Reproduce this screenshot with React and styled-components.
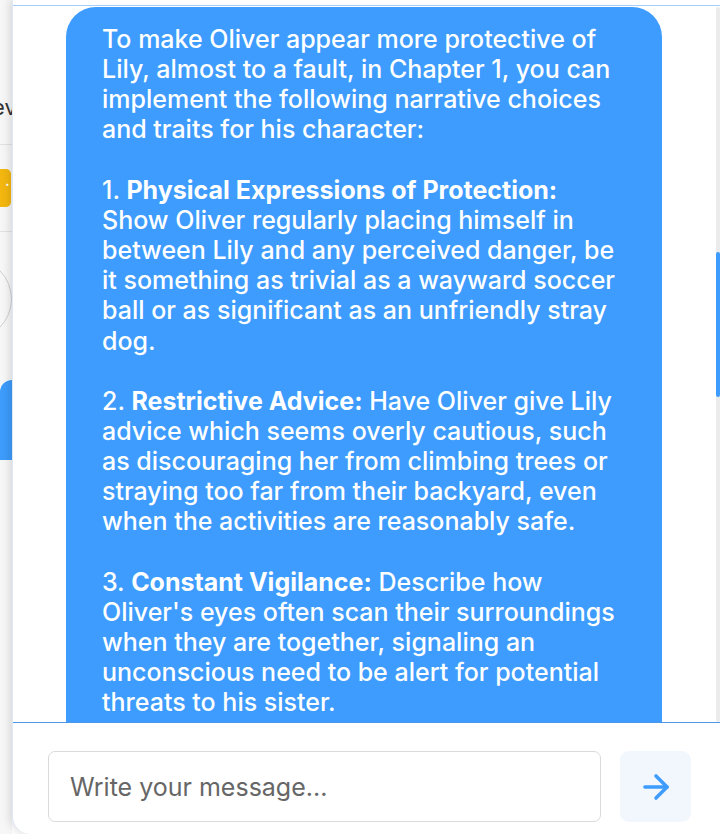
import React from 'react'
import styled, { createGlobalStyle } from 'styled-components'
import { ArrowRight } from 'lucide-react'

const GlobalStyle = createGlobalStyle`
  html, body {
    margin: 0;
    padding: 0;
    height: 100%;
    background: #ffffff;
    font-family: Inter, "Noto Sans", sans-serif;
  }
  #root {
    height: 834px;
  }
`

const paragraphs = [
  { text: 'To make Oliver appear more protective of Lily, almost to a fault, in Chapter 1, you can implement the following narrative choices and traits for his character:' },
  { num: '1.', title: 'Physical Expressions of Protection:', text: 'Show Oliver regularly placing himself in between Lily and any perceived danger, be it something as trivial as a wayward soccer ball or as significant as an unfriendly stray dog.' },
  { num: '2.', title: 'Restrictive Advice:', text: 'Have Oliver give Lily advice which seems overly cautious, such as discouraging her from climbing trees or straying too far from their backyard, even when the activities are reasonably safe.' },
  { num: '3.', title: 'Constant Vigilance:', text: 'Describe how Oliver\'s eyes often scan their surroundings when they are together, signaling an unconscious need to be alert for potential threats to his sister.' },
  { num: '4.', title: 'Emotional Reassurance:', text: 'Let Oliver be the first to comfort Lily whenever she is upset, sometimes before she even asks for help.' }
]

const App = () =>
  <>
    <GlobalStyle />
    <S.Screen>
      <S.Backdrop>
        <S.BackText>ev</S.BackText>
        <S.BackRule />
        <S.BackButton>.</S.BackButton>
        <S.BackRule />
        <S.BackCircle />
        <S.BackCard />
      </S.Backdrop>

      <S.Panel>
        <S.Messages>
          <S.List>
            <S.Bubble>
              {paragraphs.map((p, i) =>
                <S.Paragraph key={i}>
                  {p.num && <>{p.num} </>}
                  {p.title && <strong>{p.title}</strong>}
                  {p.title && ' '}
                  {p.text}
                </S.Paragraph>
              )}
            </S.Bubble>
          </S.List>
          <S.Track>
            <S.Thumb />
          </S.Track>
        </S.Messages>

        <S.Composer>
          <S.Input placeholder='Write your message...' />
          <S.Send aria-label='Send'>
            <ArrowRight size={38} strokeWidth={2.2} />
          </S.Send>
        </S.Composer>
      </S.Panel>
    </S.Screen>
  </>

const S = {
  Screen: styled.div`
    display: flex;
    height: 834px;
    width: 720px;
    overflow: hidden;
  `,
  Backdrop: styled.div`
    width: 12px;
    flex: none;
    display: flex;
    flex-direction: column;
    overflow: hidden;
    background: #f7f7f7;
  `,
  BackText: styled.div`
    margin-top: 94px;
    margin-left: -8px;
    font-size: 22px;
    color: #333;
    line-height: 26px;
    white-space: nowrap;
  `,
  BackRule: styled.div`
    margin-top: 24px;
    height: 1px;
    flex: none;
    background: #e2e2e2;
  `,
  BackButton: styled.div`
    margin-top: 24px;
    margin-left: -20px;
    width: 30px;
    height: 38px;
    flex: none;
    border-radius: 0 5px 5px 0;
    background: #f4b70f;
    color: #fff;
    font-size: 18px;
    text-align: right;
    padding-right: 1px;
  `,
  BackCircle: styled.div`
    margin-top: 26px;
    margin-left: -70px;
    width: 80px;
    height: 80px;
    flex: none;
    border-radius: 50%;
    border: 1px solid #cfcfcf;
  `,
  BackCard: styled.div`
    margin-top: 40px;
    width: 30px;
    height: 80px;
    flex: none;
    border-radius: 12px 0 0 0;
    background: #3d9cfc;
  `,
  Panel: styled.div`
    flex: 1;
    display: flex;
    flex-direction: column;
    background: #fff;
    border-left: 1px solid #dfe8f5;
    border-radius: 0 0 0 18px;
    box-shadow: -3px 0 9px rgba(0, 0, 0, 0.12);
    padding-top: 5px;
    min-width: 0;
  `,
  Messages: styled.div`
    flex: 1;
    display: flex;
    min-height: 0;
    border-top: 1px solid #a5cdf7;
    border-bottom: 1px solid #4b96e6;
  `,
  List: styled.div`
    flex: 1;
    overflow: hidden;
    padding: 1px 54px 0 53px;
  `,
  Bubble: styled.div`
    background: #3d9cfd;
    color: #fff;
    border-radius: 30px 30px 0 0;
    padding: 17px 34px 40px 36px;
    font-size: 25px;
    line-height: 30.15px;
    font-weight: 500;

    strong {
      font-weight: 700;
    }
  `,
  Paragraph: styled.p`
    margin: 0 0 30.15px;
  `,
  Track: styled.div`
    width: 4px;
    flex: none;
    margin-top: 1px;
    background: #ebebeb;
    border-radius: 2px;
    display: flex;
    flex-direction: column;
  `,
  Thumb: styled.div`
    margin-top: 245px;
    height: 145px;
    background: #3d9cfd;
    border-radius: 2px;
  `,
  Composer: styled.div`
    display: flex;
    align-items: center;
    gap: 19px;
    padding: 28px 29px 12px 35px;
  `,
  Input: styled.input`
    flex: 1;
    min-width: 0;
    height: 71px;
    box-sizing: border-box;
    padding: 0 21px;
    border: 1.5px solid #dadada;
    border-radius: 7px;
    font-family: Inter, "Noto Sans", sans-serif;
    font-size: 25px;
    color: #333;
    outline: none;

    &::placeholder {
      color: #666666;
    }
  `,
  Send: styled.button`
    width: 71px;
    height: 71px;
    flex: none;
    border: none;
    border-radius: 9px;
    background: #f2f7fe;
    color: #3d9cfd;
    display: flex;
    align-items: center;
    justify-content: center;
    padding: 0;
  `
}

export default App
